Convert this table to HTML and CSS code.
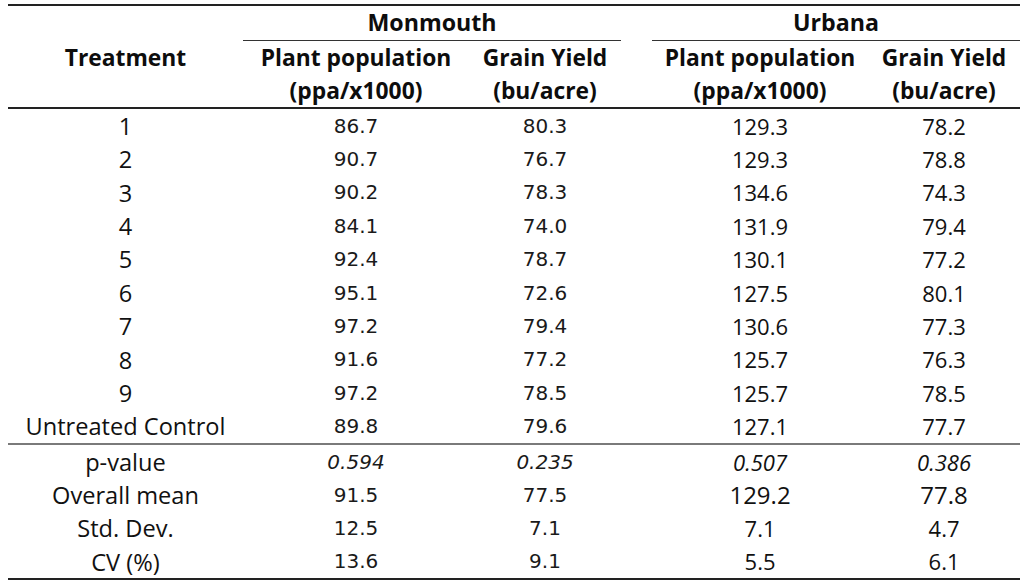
FILE: index.html
```html
<!DOCTYPE html>
<html>
<head>
<meta charset="utf-8">
<link rel="stylesheet" href="styles.css">
</head>
<body>
<table class="results">
  <colgroup>
    <col class="c-treat">
    <col class="c-mpop">
    <col class="c-myld">
    <col class="c-gap">
    <col class="c-upop">
    <col class="c-uyld">
  </colgroup>
  <thead>
    <tr class="h1">
      <th rowspan="3" class="treat-head">Treatment</th>
      <th colspan="2" class="site">Monmouth</th>
      <th class="gap"></th>
      <th colspan="2" class="site">Urbana</th>
    </tr>
    <tr class="h2">
      <th>Plant population</th>
      <th>Grain Yield</th>
      <th class="gap"></th>
      <th>Plant population</th>
      <th>Grain Yield</th>
    </tr>
    <tr class="h3">
      <th>(ppa/x1000)</th>
      <th>(bu/acre)</th>
      <th class="gap"></th>
      <th>(ppa/x1000)</th>
      <th>(bu/acre)</th>
    </tr>
  </thead>
  <tbody class="data">
    <tr><td class="lbl">1</td><td class="v">86.7</td><td class="v">80.3</td><td></td><td>129.3</td><td>78.2</td></tr>
    <tr><td class="lbl">2</td><td class="v">90.7</td><td class="v">76.7</td><td></td><td>129.3</td><td>78.8</td></tr>
    <tr><td class="lbl">3</td><td class="v">90.2</td><td class="v">78.3</td><td></td><td>134.6</td><td>74.3</td></tr>
    <tr><td class="lbl">4</td><td class="v">84.1</td><td class="v">74.0</td><td></td><td>131.9</td><td>79.4</td></tr>
    <tr><td class="lbl">5</td><td class="v">92.4</td><td class="v">78.7</td><td></td><td>130.1</td><td>77.2</td></tr>
    <tr><td class="lbl">6</td><td class="v">95.1</td><td class="v">72.6</td><td></td><td>127.5</td><td>80.1</td></tr>
    <tr><td class="lbl">7</td><td class="v">97.2</td><td class="v">79.4</td><td></td><td>130.6</td><td>77.3</td></tr>
    <tr><td class="lbl">8</td><td class="v">91.6</td><td class="v">77.2</td><td></td><td>125.7</td><td>76.3</td></tr>
    <tr><td class="lbl">9</td><td class="v">97.2</td><td class="v">78.5</td><td></td><td>125.7</td><td>78.5</td></tr>
    <tr><td class="lbl">Untreated Control</td><td class="v">89.8</td><td class="v">79.6</td><td></td><td>127.1</td><td>77.7</td></tr>
  </tbody>
  <tbody class="stats">
    <tr class="pval"><td class="lbl">p-value</td><td class="v it">0.594</td><td class="v it">0.235</td><td></td><td class="it">0.507</td><td class="it">0.386</td></tr>
    <tr><td class="lbl">Overall mean</td><td class="v">91.5</td><td class="v">77.5</td><td></td><td class="big">129.2</td><td class="big">77.8</td></tr>
    <tr><td class="lbl">Std. Dev.</td><td class="v">12.5</td><td class="v">7.1</td><td></td><td>7.1</td><td>4.7</td></tr>
    <tr><td class="lbl">CV (%)</td><td class="v">13.6</td><td class="v">9.1</td><td></td><td>5.5</td><td>6.1</td></tr>
  </tbody>
</table>
</body>
</html>
```

FILE: styles.css
```css
html, body {
  background: #ffffff;
}
body {
  margin: 0;
  padding: 4px 4px 0 8px;
  font-family: "Open Sans", Lato, sans-serif;
  color: #111;
}
.results {
  border-collapse: collapse;
  width: 1012px;
  table-layout: fixed;
  border-top: 2px solid #222;
  border-bottom: 2px solid #222;
}
.c-treat { width: 235px; }
.c-mpop { width: 226px; }
.c-myld { width: 152px; }
.c-gap { width: 31px; }
.c-upop { width: 216px; }
.c-uyld { width: 152px; }

.results th,
.results td {
  padding: 0;
  text-align: center;
  white-space: nowrap;
  line-height: 1;
}
.results th {
  font-weight: 700;
  font-size: 22.8px;
  color: #0d0d0d;
}
.results th.site { font-size: 23.2px; }
.h1 th { height: 34px; }
.site { border-bottom: 1px solid #333; }
.h2 th { height: 31px; padding-top: 2px; }
.h3 th { height: 31px; padding-top: 2px; border-bottom: 2px solid #222; }
.results th.treat-head { border-bottom: 2px solid #222; padding-top: 3px; }
.h1 .gap { border-bottom: none; }

.results td {
  font-size: 22px;
  height: 33.4px;
}
.results td.lbl { font-size: 23.6px; padding-top: 2px; height: 31.4px; }
.results td.v {
  font-family: "DejaVu Sans", Verdana, sans-serif;
  font-size: 20px;
  color: #1a1a1a;
}
.results td.it { font-style: italic; }
.results td.big { font-size: 24px; }
.stats tr.pval td { border-top: 2px solid #7a7a7a; }
.stats td { height: 33.3px; }
.stats td.lbl { height: 31.3px; }
```
